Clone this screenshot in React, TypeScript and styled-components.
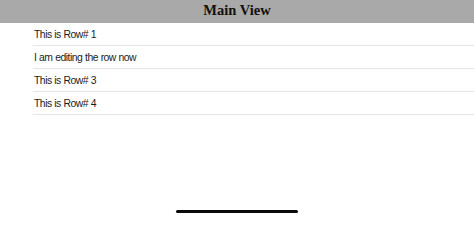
import styled, { createGlobalStyle } from "styled-components";

const GlobalStyle = createGlobalStyle`
    html, body {
        margin: 0;
        padding: 0;
        background: #ffffff;
    }
`;

const Screen = styled.div`
    position: relative;
    width: 474px;
    height: 218px;
    overflow: hidden;
    background: #ffffff;
`;

// top navigation bar
const Header = styled.header`
    height: 23px;
    display: flex;
    justify-content: center;
    align-items: center;
    background: #a9a9a9;
`;

const Title = styled.h1`
    margin: 0;
    font-family: "Liberation Serif", "Times New Roman", serif;
    font-weight: bold;
    font-size: 14.5px;
    line-height: 1;
    color: #111111;
    padding-bottom: 2px;
`;

const List = styled.ul`
    list-style: none;
    margin: 0 0 0 33px;
    padding: 0;
`;

const Row = styled.li`
    height: 22px;
    display: flex;
    align-items: center;
    padding: 1px 0 0 1px;
    box-sizing: border-box;
    height: 23px;
    border-bottom: 1px solid #e6e6e6;
    font-family: "Liberation Sans", Arial, sans-serif;
    font-size: 10.4px;
    letter-spacing: -0.5px;
    word-spacing: 0.3px;
    color: #1c1c1c;
`;

// iOS home indicator over the content
const HomeIndicator = styled.div`
    position: absolute;
    left: 176px;
    bottom: 5px;
    width: 122px;
    height: 3px;
    border-radius: 2px;
    background: #0a0a0a;
`;

const rows = [
    "This is Row# 1",
    "I am editing the row now",
    "This is Row# 3",
    "This is Row# 4",
];

function App() {
    return (
        <>
            <GlobalStyle />
            <Screen>
                <Header>
                    <Title>Main View</Title>
                </Header>
                <List>
                    {rows.map((text) => (
                        <Row key={text}>{text}</Row>
                    ))}
                </List>
                <HomeIndicator />
            </Screen>
        </>
    );
}

export default App;
